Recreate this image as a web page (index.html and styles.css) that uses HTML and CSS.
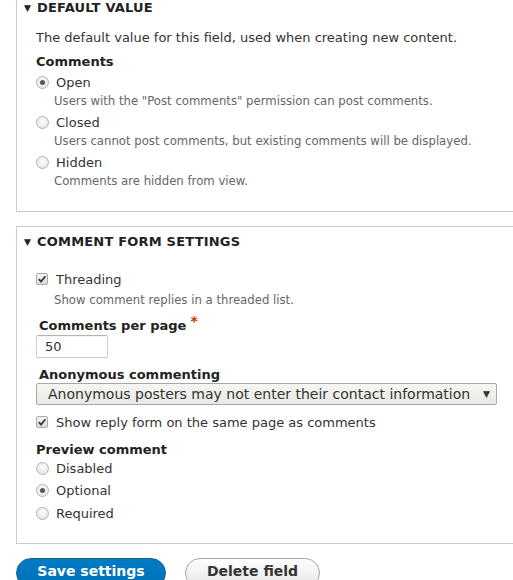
FILE: index.html
```html
<!DOCTYPE html>
<html>
<head>
<meta charset="utf-8">
<link rel="stylesheet" href="styles.css">
</head>
<body>
<div class="page">
  <section class="details first">
    <div class="summary"><span class="tri">▼</span>Default value</div>
    <div class="body">
      <p class="intro">The default value for this field, used when creating new content.</p>
      <div class="group-label">Comments</div>
      <div class="option">
        <div class="row"><span class="radio checked"></span><span class="opt-label">Open</span></div>
        <div class="desc">Users with the "Post comments" permission can post comments.</div>
      </div>
      <div class="option">
        <div class="row"><span class="radio"></span><span class="opt-label">Closed</span></div>
        <div class="desc">Users cannot post comments, but existing comments will be displayed.</div>
      </div>
      <div class="option">
        <div class="row"><span class="radio"></span><span class="opt-label">Hidden</span></div>
        <div class="desc">Comments are hidden from view.</div>
      </div>
    </div>
  </section>

  <section class="details second">
    <div class="summary"><span class="tri">▼</span>Comment form settings</div>
    <div class="body2">
      <div class="option thread">
        <div class="row"><span class="check"><svg viewBox="0 0 12 12" width="12" height="12"><path d="M2.8 6.2 L5 8.6 L9.4 3.2" fill="none" stroke="#3a3a3a" stroke-width="1.8"/></svg></span><span class="opt-label cb">Threading</span></div>
        <div class="desc">Show comment replies in a threaded list.</div>
      </div>
      <div class="field-label ind cpp">Comments per page<span class="req">*</span></div>
      <div class="textbox">50</div>
      <div class="field-label ind anon">Anonymous commenting</div>
      <div class="select"><span>Anonymous posters may not enter their contact information</span><span class="arrow">▼</span></div>
      <div class="row reply"><span class="check"><svg viewBox="0 0 12 12" width="12" height="12"><path d="M2.8 6.2 L5 8.6 L9.4 3.2" fill="none" stroke="#3a3a3a" stroke-width="1.8"/></svg></span><span class="opt-label cb">Show reply form on the same page as comments</span></div>
      <div class="field-label preview">Preview comment</div>
      <div class="prow"><span class="radio"></span><span class="opt-label">Disabled</span></div>
      <div class="prow"><span class="radio checked"></span><span class="opt-label">Optional</span></div>
      <div class="prow"><span class="radio"></span><span class="opt-label">Required</span></div>
    </div>
  </section>

  <div class="actions">
    <button class="btn primary">Save settings</button>
    <button class="btn secondary">Delete field</button>
  </div>
</div>
</body>
</html>
```

FILE: styles.css
```css
html, body {
  margin: 0;
  padding: 0;
  overflow: hidden;
  background: #fff;
}
body {
  font-family: "DejaVu Sans", Verdana, sans-serif;
  color: #333;
  font-size: 13px;
}
.page {
  padding-left: 16px;
  width: 501px;
}
.details {
  border: 1px solid #ccc;
  background: #fff;
}
.first {
  margin-top: -7px;
}
.second {
  margin-top: 14px;
}
.summary {
  padding: 6px 0 0 7px;
  line-height: 16px;
  font-size: 13px;
  font-weight: bold;
  text-transform: uppercase;
  color: #222;
  letter-spacing: 0.2px;
}
.second .summary {
  padding-top: 7px;
}
.tri {
  font-size: 9px;
  display: inline-block;
  width: 13px;
  vertical-align: 1px;
}
.body {
  padding: 13px 19px 18px 19px;
}
.body2 {
  padding: 20px 19px 21px 19px;
}
.intro {
  margin: 0;
  line-height: 18px;
  font-size: 13px;
}
.group-label, .field-label {
  font-weight: bold;
  font-size: 13px;
  line-height: 18px;
  color: #222;
}
.group-label {
  margin-top: 6px;
}
.option {
  margin-top: 2px;
  margin-bottom: 4px;
}
.row {
  display: flex;
  align-items: center;
  height: 18px;
  font-size: 13px;
}
.opt-label {
  margin-left: 7px;
  color: #333;
}
.opt-label.cb {
  margin-left: 8px;
}
.desc {
  margin-top: 2px;
  margin-left: 18px;
  font-size: 11.7px;
  line-height: 16px;
  color: #666;
}
.radio {
  width: 11px;
  height: 11px;
  border-radius: 50%;
  border: 1px solid #b4b4b4;
  background: radial-gradient(circle at 50% 40%, #fdfdfd 0%, #e8e8e8 70%, #d8d8d8 100%);
  position: relative;
  flex: none;
}
.radio.checked::after {
  content: "";
  position: absolute;
  left: 3px;
  top: 3px;
  width: 5px;
  height: 5px;
  border-radius: 50%;
  background: #555;
}
.check {
  width: 10px;
  height: 10px;
  border: 1px solid #aaa;
  border-radius: 2px;
  background: linear-gradient(#f4f4f4, #dcdcdc);
  display: flex;
  align-items: center;
  justify-content: center;
  flex: none;
  overflow: hidden;
}
.check svg {
  display: block;
  flex: none;
}
.thread {
  margin: 0;
}
.thread .desc {
  margin-top: 4px;
}
.ind {
  padding-left: 3px;
}
.cpp {
  margin-top: 9px;
}
.req {
  color: #e32700;
  margin-left: 4px;
  font-size: 14px;
  vertical-align: 4px;
  line-height: 0;
}
.textbox {
  width: 62px;
  height: 21px;
  border: 1px solid #ccc;
  border-top-color: #b3b3b3;
  border-radius: 2px;
  padding-left: 8px;
  line-height: 21px;
  font-size: 13px;
  color: #333;
  box-shadow: inset 0 1px 1px rgba(0,0,0,0.05);
}
.anon {
  margin-top: 8px;
}
.select {
  display: flex;
  align-items: center;
  justify-content: space-between;
  height: 20px;
  width: 442px;
  margin-top: -1px;
  border: 1px solid #a8a8a8;
  border-radius: 2px;
  background: linear-gradient(#f6f6f3, #e8e8e4);
  padding: 0 6px 0 11px;
  font-size: 14px;
  color: #333;
}
.arrow {
  font-size: 9px;
  color: #333;
}
.reply {
  margin-top: 8px;
}
.preview {
  margin-top: 10px;
}
.prow {
  display: flex;
  align-items: center;
  height: 18px;
  margin-bottom: 4.5px;
  font-size: 13px;
}
.prow:last-child {
  margin-bottom: 0;
}
.actions {
  display: flex;
  gap: 19px;
  margin-top: 14px;
}
.btn {
  display: block;
  font-family: "DejaVu Sans", Verdana, sans-serif;
  font-weight: bold;
  font-size: 14px;
  height: 30px;
  border-radius: 20px;
  padding: 0 0 4px 0;
  line-height: 24px;
}
.primary {
  width: 150px;
  background: linear-gradient(#007bc6, #0071b8);
  border: 1px solid #1e5c90;
  color: #fff;
}
.secondary {
  width: 135px;
  background: linear-gradient(#fefefe, #e6e6e3);
  border: 1px solid #a6a6a6;
  color: #333;
}
```
